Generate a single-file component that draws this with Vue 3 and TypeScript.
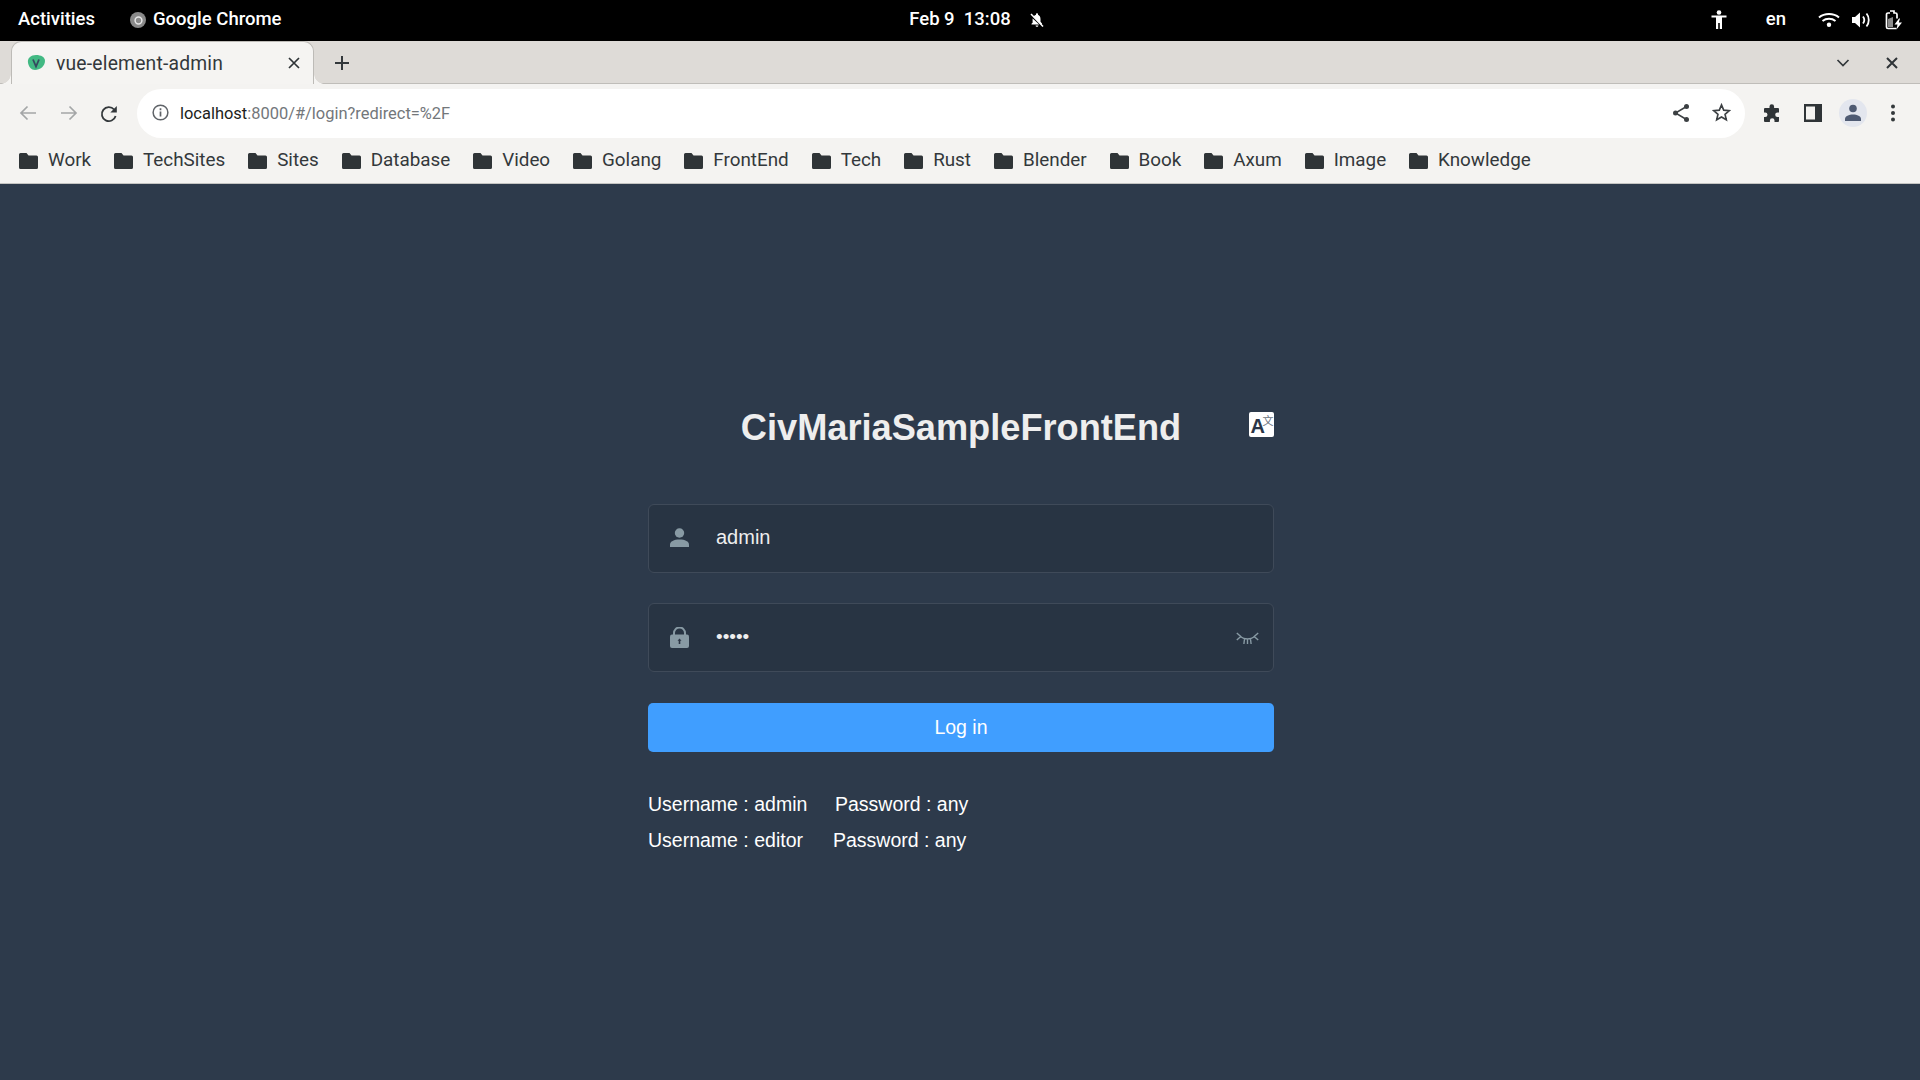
<script setup lang="ts">
const bookmarks: string[] = ['Work','TechSites','Sites','Database','Video','Golang','FrontEnd','Tech','Rust','Blender','Book','Axum','Image','Knowledge']
</script>

<template>
  <div class="screen">
    <header class="topbar">
      <div class="top-left">
        <span class="activities lift">Activities</span>
        <span class="appname">
          <svg class="chrome" viewBox="0 0 16 16" width="16" height="16"><circle cx="8" cy="8" r="8" fill="#8a8a8a"/><circle cx="8.5" cy="8.5" r="3.4" fill="none" stroke="#e6e6e6" stroke-width="1.5"/></svg>
          <span class="lift">Google Chrome</span>
        </span>
      </div>
      <div class="top-center">
        <span class="clock lift">Feb 9&nbsp;&nbsp;13:08</span>
        <svg viewBox="0 0 16 16" width="16" height="16"><path d="M8 1.2c-.6 0-1 .4-1 1v.5C5.6 3.1 4.8 4 4.4 5l7.4 7.4H13v-1l-1.5-1.6V7c0-2-1-3.700-2.500-4.300v-.5c0-.6-.4-1-1-1zM3.700 6.500c-.1.200-.1.300-.1.500v3.700L2.500 11.800v.8h7.700zM6.600 13.400c0 .8.600 1.400 1.400 1.400s1.400-.6 1.400-1.400z" fill="#fff"/><path d="M2 2l12 12.500" stroke="#fff" stroke-width="1.500"/></svg>
      </div>
      <div class="top-right">
        <svg class="ic-a11y" viewBox="0 0 16 19" width="16" height="19"><circle cx="8" cy="2.500" r="2.300" fill="#fff"/><path d="M0.500 5.500h15v2h-4.500v11.500H8.800v-6H7.200v6H5V7.500H.5z" fill="#fff"/></svg>
        <span class="lang lift">en</span>
        <svg class="ic-wifi" viewBox="0 0 22 16" width="22" height="16"><path d="M1 5.500C6.500.8 15.500.8 21 5.500M4.500 9c3.800-3 9.200-3 13 0" fill="none" stroke="#fff" stroke-width="2"/><circle cx="11" cy="12.800" r="2.200" fill="#fff"/></svg>
        <svg class="ic-vol" viewBox="0 0 20 16" width="20" height="16"><path d="M0 5h3l5-4.500v15L3 11H0z" fill="#fff"/><path d="M11 4.500c1.500 2 1.500 5 0 7M14.500 1.500c3 3.500 3 9.500 0 13" fill="none" stroke="#fff" stroke-width="1.800"/></svg>
        <svg class="ic-bat" viewBox="0 0 18 20" width="18" height="20"><path d="M5 1h4v2h1.500a1.500 1.500 0 0 1 1.500 1.500v4M11.500 18.500H3A1.500 1.500 0 0 1 1.500 17V4.500A1.500 1.500 0 0 1 3 3h2" fill="none" stroke="#fff" stroke-width="1.700"/><path d="M3 9l5-2v10H3z" fill="#8c8c8c"/><path d="M14 8.500l-4.500 6h3l-1 5 5.500-7h-3.200l1.200-4z" fill="#fff"/></svg>
      </div>
    </header>

    <div class="tabstrip">
      <div class="tab">
        <svg class="favicon" viewBox="0 0 18 16" width="18" height="16"><path d="M1 8C0 3 4 0 9 0c5 0 9 2 9 6 0 5-5 9-10 9-4 0-6-3-7-7z" fill="#42b983"/><path d="M6 4.500l3 7 3-7" fill="none" stroke="#35495e" stroke-width="1.800"/></svg>
        <span class="tab-title">vue-element-admin</span>
        <svg class="tab-close" viewBox="0 0 12 12" width="12" height="12"><path d="M1 1l10 10M11 1L1 11" stroke="#2f3437" stroke-width="1.700"/></svg>
      </div>
      <svg class="newtab" viewBox="0 0 16 16" width="16" height="16"><path d="M8 1v14M1 8h14" stroke="#33383b" stroke-width="2"/></svg>
      <div class="strip-right">
        <svg viewBox="0 0 14 8" width="14" height="8"><path d="M1.500 1l5.500 5.500L12.500 1" fill="none" stroke="#33383b" stroke-width="1.700"/></svg>
        <svg viewBox="0 0 12 12" width="12" height="12"><path d="M1 1l10 10M11 1L1 11" stroke="#2f3437" stroke-width="2"/></svg>
      </div>
    </div>

    <div class="toolbar">
      <svg class="nav arrow" viewBox="0 0 18 16" width="18" height="16"><path d="M17 8H2M8.500 1.500L2 8l6.500 6.500" fill="none" stroke="#a4a6a7" stroke-width="1.700"/></svg>
      <svg class="nav arrow" viewBox="0 0 18 16" width="18" height="16"><path d="M1 8h15M9.500 1.500L16 8l-6.500 6.500" fill="none" stroke="#a4a6a7" stroke-width="1.700"/></svg>
      <svg class="nav reload" viewBox="0 0 18 18" width="18" height="18"><path d="M15.600 11a7 7 0 1 1-1.500-6.500" fill="none" stroke="#33383b" stroke-width="1.800"/><path d="M16.800 1v6.500h-6.500z" fill="#33383b"/></svg>
      <div class="omnibox">
        <svg class="info" viewBox="0 0 18 18" width="17" height="17"><circle cx="9" cy="9" r="7.800" fill="none" stroke="#5f6368" stroke-width="1.600"/><path d="M9 8v5.200M9 4.500v2" stroke="#5f6368" stroke-width="1.800"/></svg>
        <span class="url"><b>localhost</b>:8000/#/login?redirect=%2F</span>
        <span class="omni-actions">
          <svg viewBox="0 0 18 20" width="18" height="20"><circle cx="14.500" cy="3.500" r="2.500" fill="#3c4043"/><circle cx="3.500" cy="10" r="2.500" fill="#3c4043"/><circle cx="14.500" cy="16.500" r="2.500" fill="#3c4043"/><path d="M14.500 3.500L3.500 10l11 6.500" fill="none" stroke="#3c4043" stroke-width="1.500"/></svg>
          <svg viewBox="0 0 20 20" width="19" height="19"><path d="M10 2l2.300 5.500 6 .5-4.600 3.900 1.400 5.800L10 14.700l-5.100 3 1.400-5.800L1.700 8l6-.5z" fill="none" stroke="#3c4043" stroke-width="1.700"/></svg>
        </span>
      </div>
      <div class="tb-right">
        <svg viewBox="0 0 18 18" width="18" height="18"><path d="M6.500 2.500a2.300 2.300 0 0 1 4.600 0V4H15a1 1 0 0 1 1 1v3.500h-1.500a2.300 2.300 0 0 0 0 4.600H16V17a1 1 0 0 1-1 1h-3.500v-1.500a2.300 2.300 0 0 0-4.600 0V18H2a1 1 0 0 1-1-1v-4h1.200a2.300 2.300 0 0 0 0-4.600H1V5a1 1 0 0 1 1-1h4.500z" fill="#2f3437"/></svg>
        <svg class="panel" viewBox="0 0 18 18" width="18" height="18"><path d="M0 0h18v18H0zM2 2.500v13h9v-13z" fill="#2f3437" fill-rule="evenodd"/></svg>
        <span class="avatar">
          <svg viewBox="0 0 18 18" width="18" height="18"><circle cx="9" cy="4.500" r="3.800" fill="#4f5b73"/><path d="M1 17v-2c0-3 4-4.500 8-4.500s8 1.500 8 4.500v2z" fill="#4f5b73"/></svg>
        </span>
        <svg class="dots" viewBox="0 0 4 18" width="4" height="18"><circle cx="2" cy="2.500" r="2" fill="#33383b"/><circle cx="2" cy="9" r="2" fill="#33383b"/><circle cx="2" cy="15.500" r="2" fill="#33383b"/></svg>
      </div>
    </div>

    <nav class="bookmarks">
      <span v-for="b in bookmarks" :key="b" class="bm">
        <svg viewBox="0 0 19 16" width="19" height="16"><path d="M1.500 0h6l2 2.500h8A1.500 1.500 0 0 1 19 4v10.500a1.500 1.500 0 0 1-1.500 1.500h-16A1.500 1.500 0 0 1 0 14.500v-13A1.500 1.500 0 0 1 1.500 0z" fill="#2f3437"/></svg>
        <span class="bm-label">{{ b }}</span>
      </span>
    </nav>

    <main class="page">
      <form class="login" @submit.prevent>
        <div class="title-row">
          <h3 class="title">CivMariaSampleFrontEnd</h3>
          <span class="lang-btn">
            <svg viewBox="0 0 25 25" width="25" height="25"><rect width="25" height="25" rx="2" fill="#fff"/><text x="1.500" y="21" font-family="Liberation Sans" font-weight="700" font-size="20" fill="#2a3547">A</text><text x="13.500" y="13" font-family="Noto Sans CJK SC" font-size="11" fill="#6a7380">文</text></svg>
          </span>
        </div>
        <div class="field">
          <svg class="field-ic person" viewBox="0 0 19 19" width="19" height="19"><circle cx="9.500" cy="5" r="4.700" fill="#889aa4"/><path d="M0 19v-2.500c0-3 4-5 9.500-5s9.500 2 9.500 5V19z" fill="#889aa4"/></svg>
          <input class="field-input" type="text" value="admin" readonly />
        </div>
        <div class="field">
          <svg class="field-ic" viewBox="0 0 19 21" width="19" height="21"><path d="M4 8V6a5.500 5.500 0 0 1 11 0v2" fill="none" stroke="#889aa4" stroke-width="2"/><rect y="7.500" width="19" height="13.500" rx="2" fill="#889aa4"/><path d="M9.500 11.500l2 2.200h-1.200V17H8.700v-3.300H7.500z" fill="#2b3544"/></svg>
          <input class="field-input secret" type="password" value="admin" readonly />
          <svg class="eye" viewBox="0 0 23 13" width="23" height="13"><path d="M4 4.500Q11.500 9.500 19 4.500M.8 1l4 3.500L.8 8M22.200 1l-4 3.500 4 3.500M8.500 7l-.6 5M14.500 7l.6 5M11.500 7.500v4.500" fill="none" stroke="#889aa4" stroke-width="1.400"/></svg>
        </div>
        <button class="submit" type="button">Log in</button>
        <div class="tips">
          <div class="tip"><span class="u">Username : admin</span><span>Password : any</span></div>
          <div class="tip"><span class="u e">Username : editor</span><span>Password : any</span></div>
        </div>
      </form>
    </main>
  </div>
</template>

<style scoped>
.screen { width: 1920px; height: 1080px; overflow: hidden; display: flex; flex-direction: column; font-family: Roboto, sans-serif; background: #2d3a4b; }
svg { display: block; flex: none; }

.topbar { height: 41px; box-sizing: border-box; padding-bottom: 2px; background: #000; color: #fff; display: grid; grid-template-columns: 1fr auto 1fr; align-items: center; font-size: 18.500px; font-weight: 500; }
.lift { margin-bottom: 2px; }
.top-left { display: flex; align-items: center; padding-left: 18px; }
.appname { display: flex; align-items: center; gap: 7px; margin-left: 35px; }
.top-center { display: flex; align-items: center; gap: 18px; padding-left: 34px; }
.top-right { display: flex; align-items: center; justify-content: flex-end; padding-right: 17px; }
.lang { margin-left: 39px; margin-right: 32px; }
.ic-vol { margin-left: 12px; }
.ic-bat { margin-left: 13px; }

.tabstrip { height: 43px; background: #dedbd7; border-bottom: 1px solid #bfbdb9; box-sizing: border-box; display: flex; align-items: center; position: relative; }
.tab { margin-left: 11px; width: 303px; height: 43px; box-sizing: border-box; background: #f5f4f2; border: 1px solid #bdbbb7; border-bottom: none; border-radius: 10px 10px 0 0; display: flex; align-items: center; padding: 1px 13px 0 15px; position: relative; }
.tab::before, .tab::after { content: ""; position: absolute; bottom: 0; width: 10px; height: 10px; }
.tab::before { left: -11px; background: radial-gradient(circle at 0 0, transparent 9.500px, #f5f4f2 10px); }
.tab::after { right: -11px; background: radial-gradient(circle at 100% 0, transparent 9.500px, #f5f4f2 10px); }
.favicon { margin-right: 11px; }
.tab-title { font-size: 19.300px; color: #33383b; letter-spacing: .2px; flex: 1; }
.newtab { margin-left: 20px; margin-top: 2px; }
.strip-right { margin-left: auto; margin-top: 2px; display: flex; align-items: center; gap: 36px; padding-right: 22px; }

.toolbar { height: 54px; box-sizing: border-box; padding-top: 5px; background: #f4f3f1; display: flex; align-items: center; padding-left: 19px; position: relative; }
.arrow { margin-right: 23px; margin-bottom: 2px; }
.reload { margin-left: -1px; }
.omnibox { margin-left: 19px; width: 1608px; height: 49px; box-sizing: border-box; background: #fff; border-radius: 25px; display: flex; align-items: center; padding: 0 14px 0 15px; }
.info { margin-bottom: 2px; }
.url { margin-left: 11px; font-size: 16.450px; color: #73777b; }
.url b { font-weight: 400; color: #1c1e20; }
.omni-actions { margin-left: auto; margin-bottom: 2px; display: flex; align-items: center; gap: 22px; }
.tb-right { margin-left: 18px; margin-bottom: 2px; display: flex; align-items: center; }
.panel { margin-left: 23px; }
.avatar { margin-left: 17px; width: 28px; height: 28px; border-radius: 50%; background: #e3e6ee; display: flex; align-items: center; justify-content: center; }
.dots { margin-left: 24px; }

.bookmarks { height: 46px; box-sizing: border-box; background: #f4f3f1; border-bottom: 1px solid #c4c4c2; display: flex; align-items: center; gap: 22.900px; padding-left: 19px; font-size: 18.850px; color: #33383b; }
.bm { display: flex; align-items: center; gap: 10px; }
.bm-label { margin-bottom: 2px; }

.page { flex: 1; padding-top: 223px; display: flex; justify-content: center; font-family: "Liberation Sans", Arial, sans-serif; padding-left: 2px; }
.login { width: 626px; }
.title-row { position: relative; height: 42px; display: flex; align-items: center; justify-content: center; margin-bottom: 55px; }
.title { margin: 0; font-size: 36.200px; font-weight: 700; color: #eee; line-height: 42px; }
.lang-btn { position: absolute; right: 0; top: 5px; }
.field { height: 69px; box-sizing: border-box; background: #283443; border: 1px solid #3f4a59; border-radius: 6px; display: flex; align-items: center; padding-left: 21px; margin-bottom: 30px; color: #eee; }
.person { margin-bottom: 2px; }
.field-input { flex: 1; min-width: 0; margin-left: 27px; padding: 0 0 2px; background: transparent; border: 0; outline: 0; color: #eee; font: 20px "Liberation Sans", Arial, sans-serif; }
.field-input.secret { font-size: 19px; }
.eye { margin-right: 14px; margin-top: 2px; }
.submit { display: block; width: 100%; height: 49px; border: 0; border-radius: 5px; background: #409eff; color: #fff; font: 19.500px "Liberation Sans", Arial, sans-serif; margin-top: 31px; }
.tips { margin-top: 34px; color: #fff; font-size: 19.500px; }
.tip { height: 36px; line-height: 36px; display: flex; }
.u { width: 187px; }
.u.e { width: 185px; }
</style>
